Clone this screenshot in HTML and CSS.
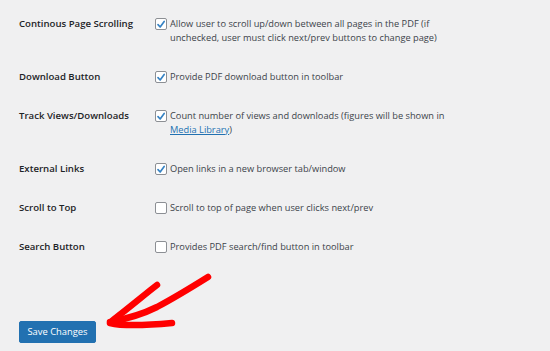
FILE: index.html
```html
<!DOCTYPE html>
<html lang="en">
<head>
<meta charset="utf-8">
<title>PDF Settings</title>
<link rel="stylesheet" href="styles.css">
</head>
<body>
<div class="wrap">
  <div class="form">
    <div class="row">
      <div class="label">Continous Page Scrolling</div>
      <label class="field"><span class="cb checked"><svg viewBox="0 0 12 12"><path d="M2.4 6.2 L5 9 L9.8 2.4"/></svg></span><span class="desc">Allow user to scroll up/down between all pages in the PDF (if unchecked, user must click next/prev buttons to change page)</span></label>
    </div>
    <div class="row">
      <div class="label">Download Button</div>
      <label class="field"><span class="cb checked"><svg viewBox="0 0 12 12"><path d="M2.4 6.2 L5 9 L9.8 2.4"/></svg></span><span class="desc">Provide PDF download button in toolbar</span></label>
    </div>
    <div class="row">
      <div class="label">Track Views/Downloads</div>
      <label class="field"><span class="cb checked"><svg viewBox="0 0 12 12"><path d="M2.4 6.2 L5 9 L9.8 2.4"/></svg></span><span class="desc">Count number of views and downloads (figures will be shown in <a href="#">Media Library</a>)</span></label>
    </div>
    <div class="row">
      <div class="label">External Links</div>
      <label class="field"><span class="cb checked"><svg viewBox="0 0 12 12"><path d="M2.4 6.2 L5 9 L9.8 2.4"/></svg></span><span class="desc">Open links in a new browser tab/window</span></label>
    </div>
    <div class="row">
      <div class="label">Scroll to Top</div>
      <label class="field"><span class="cb"></span><span class="desc">Scroll to top of page when user clicks next/prev</span></label>
    </div>
    <div class="row">
      <div class="label">Search Button</div>
      <label class="field"><span class="cb"></span><span class="desc">Provides PDF search/find button in toolbar</span></label>
    </div>
  </div>
  <div class="submit">
    <button class="button-primary">Save Changes</button>
    <svg class="arrow" width="120" height="70" viewBox="0 0 120 70">
      <path d="M108 7 C92 17 74 28 57 37 C45 43 31 48 10 52" />
      <path d="M57 15 C44 25 30 37 13 50" />
      <path d="M10 53 C22 56 40 56 72 53" />
    </svg>
  </div>
</div>
</body>
</html>
```

FILE: styles.css
```css
* { box-sizing: border-box; }
html, body {
  margin: 0;
  padding: 0;
  background: #f0f0f1;
}
body {
  width: 550px;
  height: 351px;
  overflow: hidden;
  font-family: "Open Sans", "Noto Sans", sans-serif;
  font-size: 9.25px;
  line-height: 14px;
  color: #3c434a;
}
.wrap {
  padding: 5px 0 0 19px;
}
.row {
  display: grid;
  grid-template-columns: 136px 290px;
  padding: 12px 0 13px;
}
.label {
  font-weight: 600;
  font-size: 9.6px;
  color: #1d2327;
}
.field {
  display: flex;
  align-items: flex-start;
  gap: 3px;
}
.cb {
  flex: none;
  width: 12px;
  height: 12px;
  margin-top: 1px;
  border: 1px solid #8c8f94;
  border-radius: 2px;
  background: #fff;
  display: flex;
  align-items: center;
  justify-content: center;
}
.cb svg {
  width: 11px;
  height: 11px;
}
.cb path {
  fill: none;
  stroke: #3582c4;
  stroke-width: 2;
  stroke-linecap: round;
  stroke-linejoin: round;
}
.desc a {
  color: #2271b1;
  text-decoration: underline;
}
.submit {
  position: relative;
  margin-top: 54px;
}
.button-primary {
  display: block;
  width: 77px;
  height: 22px;
  padding: 0;
  border: 1px solid #2271b1;
  border-radius: 2px;
  background: #2271b1;
  color: #fff;
  font-family: inherit;
  font-size: 9.4px;
  line-height: 20px;
  text-align: center;
}
.arrow {
  position: absolute;
  left: 81px;
  top: -51px;
}
.arrow path {
  fill: none;
  stroke: #f00;
  stroke-width: 6.5;
  stroke-linecap: round;
  stroke-linejoin: round;
}
```
